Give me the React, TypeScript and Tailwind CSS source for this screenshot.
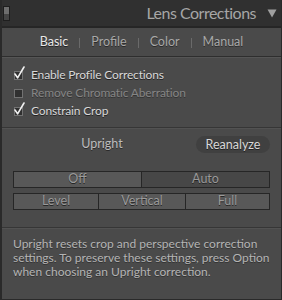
import React, { useState } from "react";

const font = { fontFamily: "Lato, 'Open Sans', sans-serif" };

function Check({ checked }: { checked: boolean }) {
    return (
        <span className="relative flex w-[9px] h-[9px] shrink-0">
            <span className="w-full h-full bg-[#303030] border border-[#727272]" />
            {checked && (
                <svg className="absolute left-[-1px] top-[-5px]" width="13" height="14" viewBox="0 0 13 14">
                    <path d="M2 8 L4.6 11.8 L11 1" fill="none" stroke="#f0f0f0" strokeWidth="1.6" strokeLinecap="round" strokeLinejoin="round" />
                </svg>
            )}
        </span>
    );
}

export default function App() {
    const [tab, setTab] = useState("Basic");
    const [mode, setMode] = useState("Auto");
    const tabs = ["Basic", "Profile", "Color", "Manual"];

    const checks = [
        { label: "Enable Profile Corrections", checked: true, disabled: false },
        { label: "Remove Chromatic Aberration", checked: false, disabled: true },
        { label: "Constrain Crop", checked: true, disabled: false },
    ];

    return (
        <div className="w-[282px] h-[300px] bg-[#4a4a4a] border-l-2 border-r border-b border-[#2a2a2a] flex flex-col overflow-hidden" style={font}>

            {/* header */}
            <div className="h-[28px] shrink-0 bg-[#303030] border-b-2 border-[#262626] -ml-[2px] flex items-center pl-[3px] pr-[4px]">
                <span className="w-[7px] h-[15px] border border-[#1e1e1e] flex flex-col">
                    <span className="h-[7px] bg-[#6e6e6e]" />
                    <span className="flex-1 bg-[#454545]" />
                </span>
                <span className="ml-auto text-[16px] text-[#a6a6a6] tracking-[-0.5px]">Lens Corrections</span>
                <svg className="ml-[11px]" width="10" height="9" viewBox="0 0 10 9">
                    <path d="M0.5 0.5 H9.5 L5 8.5 Z" fill="#a0a0a0" />
                </svg>
            </div>

            {/* tabs */}
            <div className="h-[29px] shrink-0 flex items-center justify-center pt-[1px] text-[12.5px] border-b border-[#2e2e2e] shadow-[0_1px_0_#555]">
                {tabs.map((t, i) => (
                    <React.Fragment key={t}>
                        {i > 0 && <span className="mx-[11px] w-px h-[10px] bg-[#6a6a6a]" />}
                        <button
                            onClick={() => setTab(t)}
                            className={tab === t ? "text-[#e8e8e8] [text-shadow:0_1px_0_#222]" : "text-[#a8a8a8] [text-shadow:0_1px_0_#2a2a2a]"}
                        >
                            {t}
                        </button>
                    </React.Fragment>
                ))}
            </div>

            {/* checkboxes */}
            <div className="flex flex-col pl-[12px] pt-[9px] pb-[7px] border-b border-[#363636] shadow-[0_1px_0_#525252]">
                {checks.map((c) => (
                    <div key={c.label} className="h-[18px] flex items-center gap-[8px] text-[12px] tracking-[-0.15px]">
                        <Check checked={c.checked} />
                        <span className={c.disabled ? "text-[#858585] [text-shadow:0_1px_0_#333]" : "text-[#d8d8d8] [text-shadow:0_1px_0_#222]"}>
                            {c.label}
                        </span>
                    </div>
                ))}
            </div>

            {/* upright */}
            <div className="flex flex-col px-[11px] pt-[8px] pb-[17px] border-b border-[#363636] shadow-[0_1px_0_#525252]">
                <div className="h-[17px] flex items-center text-[12.5px]">
                    <span className="w-[178px] text-center text-[#bdbdbd] [text-shadow:0_1px_0_#2a2a2a]">Upright</span>
                    <button className="ml-auto w-[74px] h-[17px] rounded-full bg-[#404040] text-[#d8d8d8] [text-shadow:0_1px_0_#222]">Reanalyze</button>
                </div>

                <div className="mt-[18px] h-[17px] flex border border-[#262626] text-[12.5px]">
                    {["Off", "Auto"].map((m, i) => (
                        <button
                            key={m}
                            onClick={() => setMode(m)}
                            className={
                                "flex-1 flex items-center justify-center text-[#9a9a9a] [text-shadow:0_1px_0_#262626] " +
                                (i > 0 ? "border-l border-[#262626] " : "") +
                                (mode === m ? "bg-[#474747]" : "bg-[#585858]")
                            }
                        >
                            {m}
                        </button>
                    ))}
                </div>

                <div className="mt-[5px] h-[17px] flex border border-[#262626] text-[12.5px]">
                    {[
                        { l: "Level", w: "w-[84px]" },
                        { l: "Vertical", w: "w-[87px]" },
                        { l: "Full", w: "flex-1" },
                    ].map((b, i) => (
                        <button
                            key={b.l}
                            className={
                                b.w + " flex items-center justify-center bg-[#585858] text-[#9a9a9a] [text-shadow:0_1px_0_#262626] " +
                                (i > 0 ? "border-l border-[#262626]" : "")
                            }
                        >
                            {b.l}
                        </button>
                    ))}
                </div>
            </div>

            {/* help text */}
            <p className="px-[11px] pt-[9px] text-[12px] leading-[14px] text-[#b4b4b4] [text-shadow:0_1px_0_#333]">
                Upright resets crop and perspective correction settings. To preserve these settings, press Option when choosing an Upright correction.
            </p>
        </div>
    );
}
